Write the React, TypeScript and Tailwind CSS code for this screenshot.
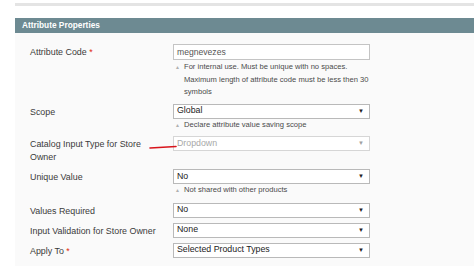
import React from "react";

const font = { fontFamily: '"Liberation Sans", Arial, sans-serif' };

function Note({ lines }: { lines: string[] }) {
  return (
    <div className="flex text-[7.6px] leading-[12.5px] text-[#4a4a4a]">
      <span className="w-[11px] pl-[2px] text-[5px] text-[#b0b0b0]">▲</span>
      <div>
        {lines.map((l) => (
          <div key={l}>{l}</div>
        ))}
      </div>
    </div>
  );
}

function Select({ value, disabled }: { value: string; disabled?: boolean }) {
  return (
    <div
      className={`flex h-[15px] w-[197px] items-center justify-between border bg-white pl-[3px] pr-[5px] text-[8.8px] ${
        disabled ? "border-[#d6d6d6] text-[#a8a8a8]" : "border-[#b9b9b9] text-[#222]"
      }`}
    >
      <span>{value}</span>
      <span className={`text-[6px] ${disabled ? "text-[#a0a0a0]" : "text-[#222]"}`}>▼</span>
    </div>
  );
}

function Row({
  label,
  required,
  children,
  className = "",
}: {
  label: React.ReactNode;
  required?: boolean;
  children: React.ReactNode;
  className?: string;
}) {
  return (
    <div className={`flex ${className}`}>
      <div className="w-[143px] pt-[2px] pr-[6px] text-[8.9px] leading-[13px] text-[#3a3a3a]">
        {label}
        {required && <span className="text-[#e02b0b]"> *</span>}
      </div>
      <div>{children}</div>
    </div>
  );
}

export default function App() {
  return (
    <div className="relative h-[266px] w-[474px] overflow-hidden bg-white" style={font}>
      <div className="ml-[15px] mt-[3px] h-[3px] bg-[#e4e4e4]" />

      <div className="ml-[15px] mt-[12px] h-[15px] bg-[#6d8a92] pl-[7px] text-[8.3px] font-bold leading-[15px] text-white">
        Attribute Properties
      </div>

      <div className="ml-[15px] h-[240px] bg-[#fafafa] pl-[15px] pt-[11px]">
        <Row label="Attribute Code" required>
          <div className="flex h-[16px] w-[197px] items-center border border-[#c4c4c4] bg-white pl-[3px] text-[8.6px] text-[#555]">
            megnevezes
          </div>
          <div className="pt-[1px]">
            <Note
              lines={[
                "For internal use. Must be unique with no spaces.",
                "Maximum length of attribute code must be less then 30",
                "symbols",
              ]}
            />
          </div>
        </Row>

        <Row label="Scope" className="mt-[5px]">
          <Select value="Global" />
          <Note lines={["Declare attribute value saving scope"]} />
        </Row>

        <Row label={<>Catalog Input Type for Store<br />Owner</>} className="mt-[5px]">
          <Select value="Dropdown" disabled />
        </Row>

        <Row label="Unique Value" className="mt-[5px]">
          <Select value="No" />
          <Note lines={["Not shared with other products"]} />
        </Row>

        <Row label="Values Required" className="mt-[6px]">
          <Select value="No" />
        </Row>

        <Row label="Input Validation for Store Owner" className="mt-[5px]">
          <Select value="None" />
        </Row>

        <Row label="Apply To" required className="mt-[5px]">
          <Select value="Selected Product Types" />
        </Row>
      </div>

      <svg className="absolute left-[148px] top-[142px]" width="32" height="10" viewBox="0 0 32 10">
        <path d="M2 6 C 10 5.5, 18 5, 28 4.5" stroke="#d8141b" strokeWidth="1.6" fill="none" strokeLinecap="round" />
      </svg>
    </div>
  );
}
